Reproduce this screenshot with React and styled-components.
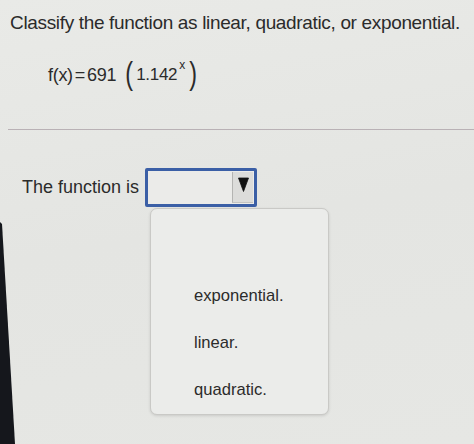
import React from "react";
import styled, { createGlobalStyle } from "styled-components";

const Global = createGlobalStyle`
  html, body { margin: 0; padding: 0; }
  body {
    width: 474px; height: 444px; overflow: hidden;
    background: #e5e6e3;
    font-family: "Liberation Sans", Arial, sans-serif;
    color: #2b2b2b;
  }
`;

const Page = styled.div`
  position: relative;
  width: 474px;
  height: 444px;
  background: linear-gradient(170deg, #e9eae7 0%, #e4e5e2 50%, #e6e7e4 100%);
  overflow: hidden;
`;

const Title = styled.div`
  padding: 12px 0 0 10px;
  font-size: 19px;
  line-height: 22px;
  letter-spacing: -0.34px;
  white-space: nowrap;
`;

const Formula = styled.div`
  display: flex;
  align-items: center;
  margin: 25px 0 0 48px;
  font-size: 18px;
  height: 32px;
  white-space: nowrap;
  letter-spacing: -0.3px;
`;

const Eq = styled.span`
  margin: 0 2px;
`;

const Paren = styled.span`
  font-size: 31px;
  font-weight: 300;
  line-height: 1;
  transform: scaleX(0.75);
  display: inline-block;
  margin: -4px 2px 0 ${(p) => (p.$close ? "3px" : "8px")};
`;

const Inner = styled.span`
  font-size: 17px;
`;

const Sup = styled.span`
  align-self: flex-start;
  font-size: 12px;
  line-height: 12px;
  margin: 0 0 0 2px;
`;

const Divider = styled.div`
  margin: 38px 0 0 8px;
  height: 1px;
  background: #b9b1b5;
`;

const Row = styled.div`
  display: flex;
  align-items: center;
  margin: 38px 0 0 22px;
  font-size: 18px;
  gap: 6px;
`;

const Select = styled.div`
  width: 104px;
  height: 31px;
  border: 3px solid #3b5fa6;
  border-radius: 2px;
  background: #ebebe9;
  display: flex;
  justify-content: flex-end;
  align-items: stretch;
  padding: 1px 1px;
  box-sizing: content-box;
`;

const ArrowBtn = styled.div`
  width: 20px;
  background: #dcdcda;
  border-left: 1px solid #b4b4b2;
  border-bottom: 1px solid #c4c4c2;
  display: flex;
  align-items: flex-start;
  justify-content: center;
  padding-top: 5px;
`;

const Menu = styled.div`
  margin: 1px 0 0 150px;
  width: 179px;
  height: 207px;
  border: 1px solid #c9c9c6;
  border-radius: 7px;
  background: #ebecea;
  box-shadow: 0 1px 3px rgba(0,0,0,0.12);
  box-sizing: border-box;
  display: flex;
  flex-direction: column;
  padding: 77px 0 0 43px;
  gap: 27px;
`;

const Option = styled.div`
  font-size: 16.6px;
  line-height: 20px;
`;

const Bezel = styled.svg`
  position: absolute;
  left: 0;
  top: 0;
`;

export default function App() {
  return (
    <Page>
      <Global />
      <Title>Classify the function as linear, quadratic, or exponential.</Title>
      <Formula>
        <span>f(x)</span>
        <Eq>=</Eq>
        <span>691</span>
        <Paren>(</Paren>
        <Inner>1.142</Inner>
        <Sup>x</Sup>
        <Paren $close>)</Paren>
      </Formula>
      <Divider />
      <Row>
        <span>The function is</span>
        <Select>
          <ArrowBtn>
            <svg width="11" height="15" viewBox="0 0 11 15">
              <path d="M0.5 1 H10.5 L5.5 14.5 Z" fill="#111" strokeLinejoin="round" stroke="#111" strokeWidth="0.8" />
            </svg>
          </ArrowBtn>
        </Select>
      </Row>
      <Menu>
        <Option>exponential.</Option>
        <Option>linear.</Option>
        <Option>quadratic.</Option>
      </Menu>
      <Bezel width="474" height="444" viewBox="0 0 474 444">
        <path d="M0 222 L2 224 L15 444 L0 444 Z" fill="#15171c" />
      </Bezel>
    </Page>
  );
}
